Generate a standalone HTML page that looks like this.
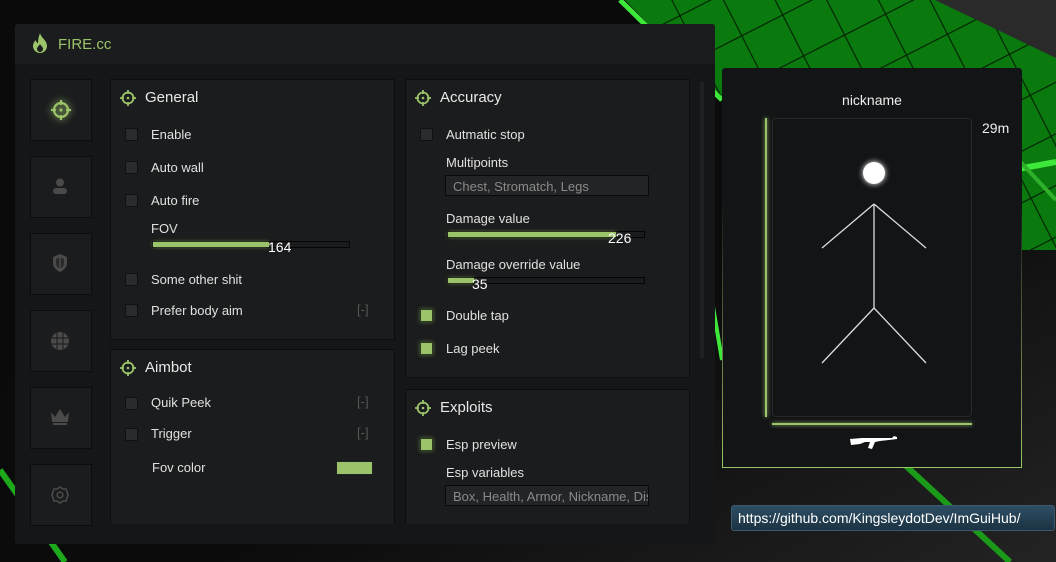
<!DOCTYPE html>
<html><head><meta charset="utf-8"><style>
*{margin:0;padding:0;box-sizing:border-box}
body{width:1056px;height:562px;overflow:hidden;background:#0b0b0b;font-family:"Liberation Sans",sans-serif;position:relative;color:#e2e2e2}
.abs{position:absolute}
.win{left:15px;top:24px;width:700px;height:520px;background:#151618;border-radius:3px}
.title{left:15px;top:24px;width:700px;height:40px;background:#1b1c1e;border-radius:3px 3px 0 0}
.side{left:30px;width:62px;height:62px;background:#1b1c1e;border:1px solid #0c0c0d}
.panel{background:#1b1c1d;border:1px solid #0d0d0e}
.h{font-size:15px;color:#e8e8e8}
.t{font-size:13px;color:#e0e0e0;white-space:nowrap}
.cb{width:13px;height:13px;background:#2a2b2d;border:1px solid #111}
.cbon{width:13px;height:13px;background:#9bc36a;border:1px solid #2c3a20;box-shadow:0 0 4px rgba(155,195,106,.5)}
.sl{height:7px;background:#1a1b1c;border:1px solid #050505}
.fill{position:absolute;left:0;top:0;bottom:0;background:#9bc36a;box-shadow:0 0 4px rgba(155,195,106,.6)}
.inp{width:204px;height:21px;background:#232426;border:1px solid #0a0a0a;font-size:13px;color:#8a8a8a;padding:3px 7px;white-space:nowrap;overflow:hidden}
.br{font-size:13px;color:#555}
</style></head><body>
<svg class="abs" style="left:0;top:0" width="1056" height="562">
<defs>
<pattern id="g" width="46" height="46" patternUnits="userSpaceOnUse" patternTransform="rotate(-27)">
<rect width="46" height="46" fill="#0a7a0e"/><path d="M0 0H46M0 0V46" stroke="#042604" stroke-width="2.5"/></pattern>
<linearGradient id="bg" x1="0" y1="0" x2="1" y2="1"><stop offset="0" stop-color="#0a0a0a"/><stop offset=".6" stop-color="#0b0b0b"/><stop offset="1" stop-color="#232323"/></linearGradient>
</defs>
<rect width="1056" height="562" fill="url(#bg)"/>
<polygon points="930,0 1056,0 1056,60" fill="#2a2a2a"/>
<polygon points="625,0 935,0 1056,58 1056,250 1010,250 722,100" fill="url(#g)"/>
<line x1="620" y1="0" x2="722" y2="100" stroke="#3ee83a" stroke-width="5"/>
<line x1="985" y1="175" x2="1056" y2="162" stroke="#3ee83a" stroke-width="6"/>
<line x1="1000" y1="140" x2="1056" y2="200" stroke="#2fb02a" stroke-width="4"/>
<line x1="905" y1="465" x2="1010" y2="562" stroke="#1a9a18" stroke-width="6"/>
<line x1="0" y1="470" x2="65" y2="562" stroke="#1ea81c" stroke-width="6"/>
<line x1="700" y1="230" x2="722" y2="360" stroke="#3ee83a" stroke-width="4"/>
</svg>
<div class="abs win"></div>
<div class="abs title"></div>
<svg class="abs" style="left:31px;top:32px" width="18" height="22" viewBox="0 0 18 22"><path d="M9 1C10 6 16 8 16 14a7 7 0 0 1-14 0c0-3 2-5 3-6 0 2 1 3 2 3C7 7 8 4 9 1z" fill="#9bc36a"/><path d="M9 12c1 2 3 3 3 5a3 3 0 0 1-6 0c0-2 2-3 3-5z" fill="#1b1c1e"/></svg>
<div class="abs" style="left:58px;top:36px;font-size:15px;color:#9bc36a">FIRE.cc</div>

<div class="abs side" style="top:79px"></div>
<svg class="abs" style="left:50px;top:99px;filter:drop-shadow(0 0 4px #9bc36a)" width="22" height="22" viewBox="0 0 22 22"><circle cx="11" cy="11" r="7" fill="none" stroke="#9bc36a" stroke-width="2.2"/><circle cx="11" cy="11" r="1.6" fill="#9bc36a"/><path d="M11 1v5M11 16v5M1 11h5M16 11h5" stroke="#9bc36a" stroke-width="2.2"/></svg>
<div class="abs side" style="top:156px"></div>
<svg class="abs" style="left:52px;top:178px" width="16" height="17"><circle cx="8" cy="4.5" r="4" fill="#4a4a4a"/><rect x="1" y="10" width="14" height="6" rx="3" fill="#4a4a4a"/></svg>
<div class="abs side" style="top:233px"></div>
<svg class="abs" style="left:51px;top:253px" width="18" height="20" viewBox="0 0 18 20"><path d="M9 1L16 4v6c0 4-3 7-7 9-4-2-7-5-7-9V4z" fill="#4a4a4a"/><path d="M9 4l4 2v4c0 3-2 5-4 6-2-1-4-3-4-6V6z" fill="#2a2a2a"/><path d="M9 4v12" stroke="#4a4a4a" stroke-width="1.5"/></svg>
<div class="abs side" style="top:310px"></div>
<svg class="abs" style="left:50px;top:331px" width="20" height="20" viewBox="0 0 20 20"><circle cx="10" cy="10" r="9" fill="#4a4a4a"/><path d="M1 7h18M1 13h18M7 1v18M13 1v18" stroke="#222" stroke-width="1.2"/></svg>
<div class="abs side" style="top:387px"></div>
<svg class="abs" style="left:50px;top:408px" width="20" height="18" viewBox="0 0 20 18"><path d="M1 4l4 5 5-8 5 8 4-5-1 10H2z" fill="#4a4a4a"/><rect x="3" y="15" width="14" height="2" fill="#4a4a4a"/></svg>
<div class="abs side" style="top:464px"></div>
<svg class="abs" style="left:51px;top:486px" width="18" height="18" viewBox="0 0 18 18"><path d="M9 1l3 2 3 0 1 3 1 3-1 3-1 3-3 0-3 2-3-2-3 0-1-3-1-3 1-3 1-3 3 0z" fill="none" stroke="#4a4a4a" stroke-width="1.6"/><circle cx="9" cy="9" r="2.8" fill="none" stroke="#4a4a4a" stroke-width="1.6"/></svg>

<div class="abs panel" style="left:110px;top:79px;width:285px;height:261px"></div>
<div class="abs panel" style="left:110px;top:349px;width:285px;height:175px;border-bottom:none"></div>
<div class="abs panel" style="left:405px;top:79px;width:285px;height:299px"></div>
<div class="abs panel" style="left:405px;top:389px;width:285px;height:135px;border-bottom:none"></div>
<div class="abs" style="left:700px;top:82px;width:4px;height:276px;background:#1f2022"></div>

<svg width="0" height="0" style="position:absolute"><defs><symbol id="cr" viewBox="0 0 18 18"><circle cx="9" cy="9" r="5.5" fill="none" stroke="#9bc36a" stroke-width="1.8"/><circle cx="9" cy="9" r="1.3" fill="#9bc36a"/><path d="M9 1v4M9 13v4M1 9h4M13 9h4" stroke="#9bc36a" stroke-width="1.8"/></symbol></defs></svg>

<svg class="abs" style="left:119px;top:89px" width="18" height="18"><use href="#cr"/></svg>
<div class="abs h" style="left:145px;top:89px">General</div>
<div class="abs cb" style="left:125px;top:128px"></div><div class="abs t" style="left:151px;top:127px">Enable</div>
<div class="abs cb" style="left:125px;top:161px"></div><div class="abs t" style="left:151px;top:160px">Auto wall</div>
<div class="abs cb" style="left:125px;top:194px"></div><div class="abs t" style="left:151px;top:193px">Auto fire</div>
<div class="abs t" style="left:151px;top:221px">FOV</div>
<div class="abs sl" style="left:152px;top:241px;width:198px"><div class="fill" style="width:116px"></div></div>
<div class="abs t" style="left:268px;top:239px;color:#fff;font-size:14px">164</div>
<div class="abs cb" style="left:125px;top:273px"></div><div class="abs t" style="left:151px;top:272px">Some other shit</div>
<div class="abs cb" style="left:125px;top:304px"></div><div class="abs t" style="left:151px;top:303px">Prefer body aim</div>
<div class="abs br" style="left:357px;top:302px">[-]</div>

<svg class="abs" style="left:119px;top:359px" width="18" height="18"><use href="#cr"/></svg>
<div class="abs h" style="left:145px;top:359px">Aimbot</div>
<div class="abs cb" style="left:125px;top:397px"></div><div class="abs t" style="left:151px;top:395px">Quik Peek</div>
<div class="abs br" style="left:357px;top:394px">[-]</div>
<div class="abs cb" style="left:125px;top:428px"></div><div class="abs t" style="left:151px;top:426px">Trigger</div>
<div class="abs br" style="left:357px;top:425px">[-]</div>
<div class="abs t" style="left:152px;top:460px">Fov color</div>
<div class="abs" style="left:336px;top:461px;width:37px;height:14px;background:#9bc36a;border:1px solid #222"></div>

<svg class="abs" style="left:414px;top:89px" width="18" height="18"><use href="#cr"/></svg>
<div class="abs h" style="left:440px;top:89px">Accuracy</div>
<div class="abs cb" style="left:420px;top:128px"></div><div class="abs t" style="left:446px;top:127px">Autmatic stop</div>
<div class="abs t" style="left:446px;top:155px">Multipoints</div>
<div class="abs inp" style="left:445px;top:175px">Chest, Stromatch, Legs</div>
<div class="abs t" style="left:446px;top:211px">Damage value</div>
<div class="abs sl" style="left:447px;top:231px;width:198px"><div class="fill" style="width:168px"></div></div>
<div class="abs t" style="left:608px;top:230px;color:#fff;font-size:14px">226</div>
<div class="abs t" style="left:446px;top:257px">Damage override value</div>
<div class="abs sl" style="left:447px;top:277px;width:198px"><div class="fill" style="width:26px"></div></div>
<div class="abs t" style="left:472px;top:276px;color:#fff;font-size:14px">35</div>
<div class="abs cbon" style="left:420px;top:309px"></div><div class="abs t" style="left:446px;top:308px">Double tap</div>
<div class="abs cbon" style="left:420px;top:342px"></div><div class="abs t" style="left:446px;top:341px">Lag peek</div>

<svg class="abs" style="left:414px;top:399px" width="18" height="18"><use href="#cr"/></svg>
<div class="abs h" style="left:440px;top:399px">Exploits</div>
<div class="abs cbon" style="left:420px;top:438px"></div><div class="abs t" style="left:446px;top:437px">Esp preview</div>
<div class="abs t" style="left:446px;top:465px">Esp variables</div>
<div class="abs inp" style="left:445px;top:485px">Box, Health, Armor, Nickname, Distance</div>

<div class="abs" style="left:722px;top:68px;width:300px;height:400px;background:#131416;border-radius:3px"></div>
<div class="abs" style="left:722px;top:467px;width:300px;height:1px;background:#9bc36a"></div>
<div class="abs" style="left:722px;top:200px;width:1px;height:268px;background:linear-gradient(rgba(155,195,106,0),#9bc36a)"></div>
<div class="abs" style="left:1021px;top:200px;width:1px;height:268px;background:linear-gradient(rgba(155,195,106,0),#9bc36a)"></div>
<div class="abs" style="left:722px;top:92px;width:300px;text-align:center;font-size:14px;color:#eee">nickname</div>
<div class="abs" style="left:772px;top:118px;width:200px;height:299px;border:1px solid #28292b;border-radius:4px"></div>
<div class="abs" style="left:765px;top:118px;width:2px;height:299px;background:#9bc36a;box-shadow:0 0 4px #9bc36a"></div>
<div class="abs" style="left:772px;top:423px;width:200px;height:2px;background:#9bc36a;box-shadow:0 0 4px #9bc36a"></div>
<div class="abs" style="left:982px;top:120px;font-size:14px;color:#eee">29m</div>
<svg class="abs" style="left:722px;top:68px" width="300" height="400">
<circle cx="152" cy="105" r="11" fill="#fff" style="filter:drop-shadow(0 0 3px #fff)"/>
<path d="M152 136L100 180M152 136L204 180M152 136V240M152 240L100 295M152 240L204 295" stroke="#ddd" stroke-width="1.3" fill="none"/>
<path d="M128 371L140 370L170 370L172 368L175 369L175 371L158 373L153 374L150 381L146 380L148 374L143 374L138 376L129 377Z" fill="#fff"/>
</svg>
<div class="abs" style="left:731px;top:505px;width:324px;height:26px;background:linear-gradient(#2d4e64,#1c3343);border:1px solid #3a5a70;border-radius:3px;font-size:14px;color:#fff;padding:4px 0 0 6px">https://github.com/KingsleydotDev/ImGuiHub/</div>
</body></html>
